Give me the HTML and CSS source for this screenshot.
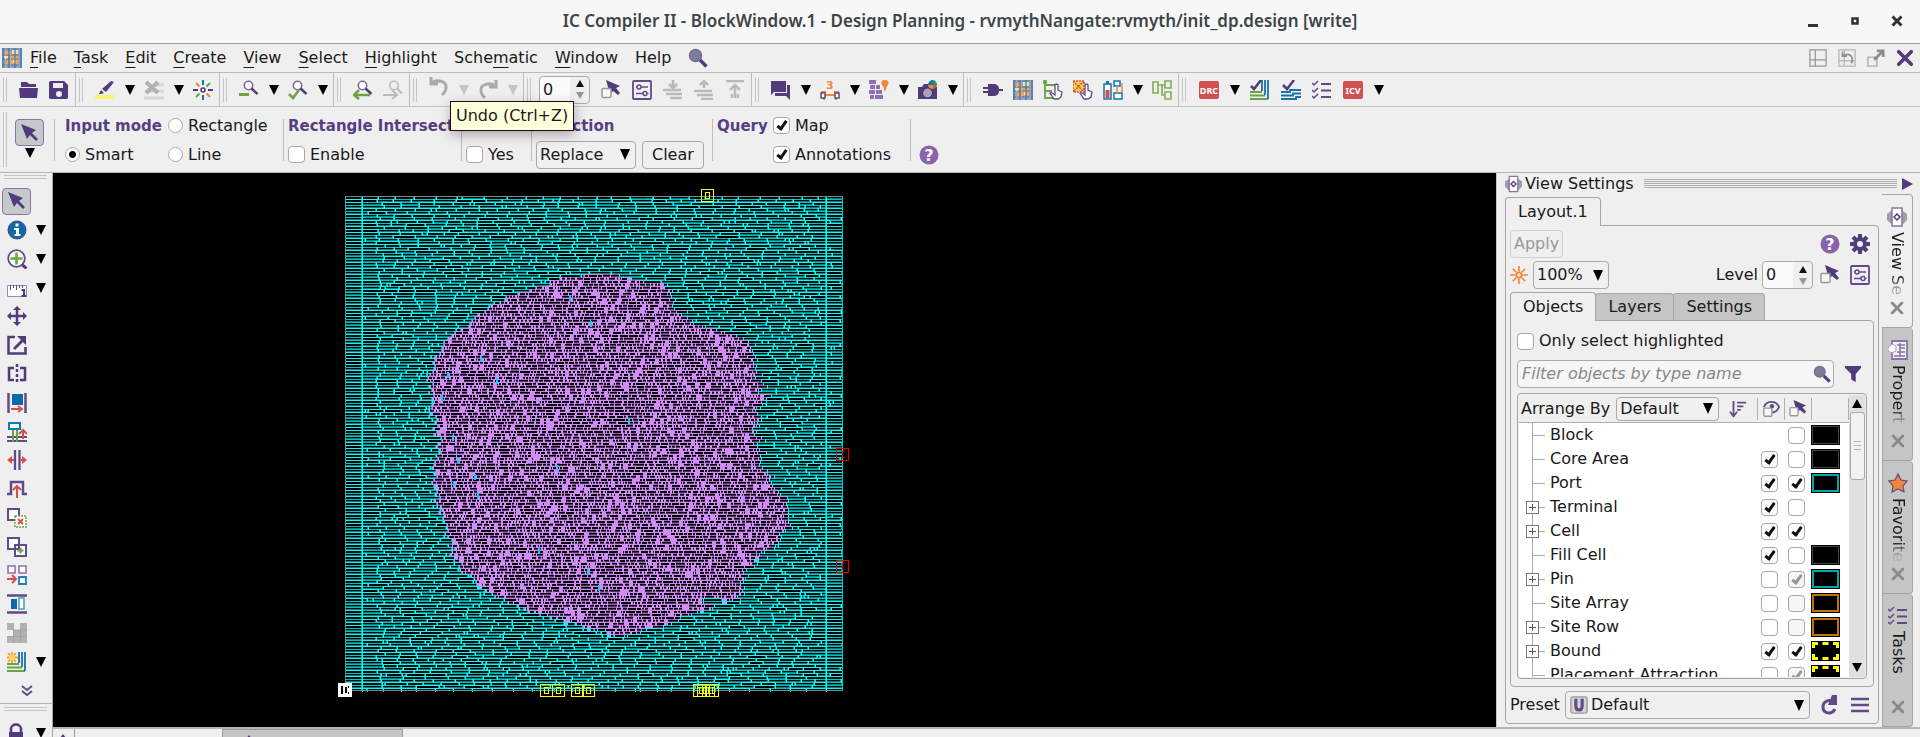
FILE: index.html
```html
<!DOCTYPE html>
<html lang="en">
<head>
  <meta charset="utf-8">
  <title>IC Compiler II - BlockWindow.1</title>
  <link rel="stylesheet" href="styles.css">
</head>
<body>
  <svg class="sprite" aria-hidden="true">
    <symbol id="chip" viewBox="0 0 20 20">
      <path fill="#8fa6bc" d="M0 0h20v20H0z"/>
      <path fill="#f6a45c" d="M3 3h6v4H3zM8 8h8v8H8zM4 13h3v5H4z"/>
      <path fill="#f3e3a0" d="M10 2h6v4h-6zM2 8h4v3H2zM11 12h3v3h-3z"/>
      <path stroke="#2a78b0" stroke-width="1.2" d="M1 0v20M7 0v20M13 0v20M19 0v20"/>
      <path stroke="#6b6b9c" stroke-dasharray="3 1.5" d="M0 1h20M0 7h20M0 11h20M0 17h20"/>
    </symbol>
    <symbol id="search" viewBox="0 0 20 20"><circle cx="7.500" cy="7.500" r="6" fill="#7b7f93" stroke="#7a6a9c" stroke-width="1.500"/><path stroke="#533c80" stroke-width="3.500" d="M12 12l6.500 6.500"/></symbol>
    <symbol id="open" viewBox="0 0 20 20"><path fill="#523b7c" d="M2 2h6l2 2h7v3H2zM0 8h19l-1 10H1z"/></symbol>
    <symbol id="save" viewBox="0 0 20 20"><path fill="#523b7c" d="M2 1h13l4 4v13l-1 1H1l-1-1V2z"/><path fill="#efefef" d="M4 3h10v5H4z"/><circle cx="10" cy="14" r="3" fill="#efefef"/></symbol>
    <symbol id="marker" viewBox="0 0 20 20"><path fill="#fbf56c" d="M0 15h20v4H0z"/><path fill="#523b7c" d="M16 1l3 1-8 10-4-3zM6 10l3 3-3 1H4z"/></symbol>
    <symbol id="unmark" viewBox="0 0 20 20"><path stroke="#d5d5d5" stroke-width="3" d="M1 11h19M0 18h20M12 5h8"/><path stroke="#b2b2b2" stroke-width="4" d="M2 2l12 11M14 2L2 13"/></symbol>
    <symbol id="burst" viewBox="0 0 20 20">
      <circle cx="10" cy="10" r="2" fill="none" stroke="#523b7c" stroke-width="1.500"/>
      <path stroke="#1673ad" stroke-width="2" d="M10 0v5M10 15v5"/><path stroke="#523b7c" stroke-width="2" d="M0 10h5M15 10h5"/>
      <path stroke="#f2863c" stroke-width="2" d="M3 3l3.500 3.500M13.500 13.500L17 17"/><path stroke="#6aa544" stroke-width="2" d="M17 3l-3.500 3.500M6.500 13.500L3 17"/>
    </symbol>
    <symbol id="lens" viewBox="0 0 20 20"><circle cx="9.500" cy="5.500" r="4.200" fill="#fff" stroke="#7b6a9e" stroke-width="1.600"/><path stroke="#523b7c" stroke-width="2.400" d="M12.500 8.500l6 5.500"/></symbol>
    <symbol id="zoom-out" viewBox="0 0 20 20"><use href="#lens"/><path fill="#6aa544" d="M0 13h10v3H0z"/></symbol>
    <symbol id="zoom-ok" viewBox="0 0 20 20"><use href="#lens"/><path fill="none" stroke="#6aa544" stroke-width="2.500" d="M1 14l4 4 6-8"/></symbol>
    <symbol id="zoom-prev" viewBox="0 0 20 20"><use href="#lens"/><path fill="none" stroke="#6aa544" stroke-width="2.500" d="M17 15H2M6 10l-5 5 5 4"/></symbol>
    <symbol id="zoom-next" viewBox="0 0 20 20"><circle cx="11" cy="5.500" r="4.200" fill="none" stroke="#bbb" stroke-width="1.600"/><path fill="none" stroke="#bbb" stroke-width="2.200" d="M14 8.500l5 5M0 15h13M9 10l5 5-5 4"/></symbol>
    <symbol id="undo" viewBox="0 0 20 20"><path fill="none" stroke="#aaa" stroke-width="3" d="M2 0v7h7M3 6c5-4 15-2 14 5 0 3-2 5-4 7"/></symbol>
    <symbol id="redo" viewBox="0 0 20 20"><path fill="none" stroke="#aaa" stroke-width="3" d="M18 0v7h-7M17 6C12 2 2 4 3 11c0 3 2 5 4 7"/></symbol>
    <symbol id="pick" viewBox="0 0 20 20"><path fill="#523b7c" d="M5 0l14 6-4 2 4 5-2 2-5-4-3 3z"/><rect x="1" y="8.500" width="9" height="9" rx="1" fill="#f7f7f7" stroke="#999" stroke-width="1.500"/></symbol>
    <symbol id="sliders" viewBox="0 0 20 20"><rect x="1" y="1" width="18" height="18" rx="1" fill="#f1eff5" stroke="#604b88" stroke-width="1.800"/><path fill="none" stroke="#604b88" stroke-width="1.500" d="M4 7h1M9 7h7M4 13.500h7M15.500 13.500h1"/><g fill="none" stroke="#604b88" stroke-width="1.500"><circle cx="7" cy="7" r="2"/><circle cx="13" cy="13.500" r="2"/></g></symbol>
    <symbol id="push-down" viewBox="0 0 20 20"><path fill="none" stroke="#b9b9b9" stroke-width="2.500" d="M0 10h18M3 14h16M7 18h12M10 0v7M6 4l4 4 4-4"/></symbol>
    <symbol id="pop-up" viewBox="0 0 20 20"><path fill="none" stroke="#b9b9b9" stroke-width="2.500" d="M0 11h18M3 15h16M7 19h12M10 8V1M6 5l4-4 4 4"/></symbol>
    <symbol id="pop-top" viewBox="0 0 20 20"><path fill="none" stroke="#b9b9b9" stroke-width="2.500" d="M1 1h18M10 18V5M5 10l5-5 5 5M7 14v4M13 14v4"/></symbol>
    <symbol id="chat" viewBox="0 0 20 20"><path fill="#523b7c" d="M0 1h15v11H3l-3 3zM16 5h3v15l-4-4H4v-3h12z"/></symbol>
    <symbol id="net3" viewBox="0 0 20 20"><text x="6" y="9" class="num">3</text><path stroke="#f2863c" stroke-width="1.800" d="M5 15h10M1 12h5M14 12h5M3 19h2M15 19h2"/><path fill="#fff" stroke="#604b88" stroke-width="1.500" d="M1 13h4v5H1zM15 13h4v5h-4z"/></symbol>
    <symbol id="bricks" viewBox="0 0 20 20"><path fill="#9070b4" d="M0 0h7v4H0zM1 5h5v4H1zM7 5h4v4H7zM0 10h6v4H0zM7 10h6v4H7zM1 15h4v4H1zM6 15h8v4H6z"/><path fill="#f2863c" d="M15.500 0c5 0 5 4 2 7l-1 4h-1l-1-4c-3-3-3-7 1-7z"/></symbol>
    <symbol id="camera" viewBox="0 0 20 20"><path fill="#523b7c" d="M0 7h4l2-3h6l2 3h5v12H0z"/><circle cx="9.500" cy="13" r="5" fill="#a7a2b8" stroke="#3b2a62"/><path fill="#2a9a55" d="M15 0a5 5 0 0 1 4 5h-4z"/><path fill="#1673ad" d="M15 0a5 5 0 0 0-5 5h5z"/><path fill="#f2863c" d="M10 5a5 5 0 0 0 5 4V5z"/><path fill="#d4504c" d="M19 5a5 5 0 0 1-4 4V5z"/></symbol>
    <symbol id="plug" viewBox="0 0 20 20"><path fill="#523b7c" d="M5 4h5c4 0 6 2 6 5h4v2h-4c0 3-2 5-6 5H5v-3H0v-2h5V9H0V7h5z"/></symbol>
    <symbol id="hand" viewBox="0 0 20 20"><path fill="#fff" stroke="#604b88" stroke-width="1.300" d="M12 13V5c0-1 3-1 3 0v5l4 2-1 5-3 2h-4l-4-6c1-1 3 0 5 2z"/></symbol>
    <symbol id="tree-hand" viewBox="0 0 20 20"><path fill="none" stroke="#6aa544" stroke-width="1.800" d="M2 0v18h8M2 5h11M2 11h7"/><circle cx="2" cy="2" r="2.200" fill="#6aa544"/><use href="#hand"/></symbol>
    <symbol id="bug-hand" viewBox="0 0 20 20"><path fill="#f7d34d" d="M0 1h11v11H0z"/><path stroke="#d4504c" stroke-width="1.600" stroke-dasharray="2 1" d="M0 1l11 11M11 1L0 12M0 1h11v11H0z" fill="none"/><use href="#hand"/></symbol>
    <symbol id="power" viewBox="0 0 20 20"><path fill="#fff" stroke="#1673ad" stroke-width="1.500" d="M1 4h7v15H1zM11 1h6v5h-6zM11 13h8v6h-8z"/><path fill="#d4504c" d="M2.500 10h4v8h-4z"/><path fill="#1673ad" d="M3 1h3v3H3z"/><path stroke="#f2863c" stroke-width="1.500" d="M14 6v7M19 3v9"/></symbol>
    <symbol id="hier" viewBox="0 0 20 20"><path fill="none" stroke="#82b060" stroke-width="1.700" d="M1 2h5v11H1zM13 1h6v7h-6zM13 12h6v7h-6zM6 5h7M10 5v10h3"/></symbol>
    <symbol id="drc" viewBox="0 0 20 20"><rect y="1" width="20" height="18" rx="2" fill="#cf5052"/><text x="10" y="14" class="tag">DRC</text></symbol>
    <symbol id="icv" viewBox="0 0 20 20"><rect y="1" width="20" height="18" rx="2" fill="#cf5052"/><text x="10" y="14" class="tag">ICV</text></symbol>
    <symbol id="layers" viewBox="0 0 20 20"><path stroke="#6aa544" stroke-width="1.800" d="M0 12h12M0 15.500h15M0 19h18"/><path stroke="#1673ad" stroke-width="1.800" d="M12 0v11M15 0v15M18 0v19"/></symbol>
    <symbol id="layer-check" viewBox="0 0 20 20"><use href="#layers"/><path fill="none" stroke="#523b7c" stroke-width="2.500" d="M1 6l3 3 7-9"/></symbol>
    <symbol id="route-check" viewBox="0 0 20 20"><path fill="none" stroke="#1673ad" stroke-width="1.800" d="M0 12h9v-2h11M0 15.500h12v-2h8M0 19h15v-2h5"/><path fill="none" stroke="#523b7c" stroke-width="2.500" d="M2 5l4 4 7-9"/></symbol>
    <symbol id="tasks" viewBox="0 0 20 20"><path stroke="#604b88" stroke-width="2" d="M9 4h10M9 10.500h10M9 17h10"/><path fill="none" stroke="#604b88" stroke-width="1.500" d="M0 3l2 2 4-4M0 10l2 2 4-4M0 16l2 2 4-4"/></symbol>
    <symbol id="arrow" viewBox="0 0 20 20"><path fill="#523b7c" d="M1 1l15 6-4 3 6 6-2 2-6-6-3 4z"/></symbol>
    <symbol id="help" viewBox="0 0 20 20"><circle cx="10" cy="10" r="9.500" fill="#8a63ab"/><text x="10" y="16" class="q">?</text></symbol>
    <symbol id="info" viewBox="0 0 20 20"><circle cx="10" cy="10" r="9" fill="#0c6aa6" stroke="#523b7c"/><path fill="#fff" d="M8.500 3.500h3v3h-3zM7 8h5v6h1.500v2h-6v-2H9v-4H7z"/></symbol>
    <symbol id="zoom-in" viewBox="0 0 20 20"><circle cx="9.500" cy="9.500" r="8.300" fill="#fff" stroke="#604b88" stroke-width="1.800"/><path stroke="#6aa544" stroke-width="2.500" d="M3.500 9.500h12M9.500 3.500v12"/><path stroke="#523b7c" stroke-width="3" d="M15.500 16l4 3.500"/></symbol>
    <symbol id="ruler" viewBox="0 0 20 20"><path fill="#fff" stroke="#9a8cb4" d="M.5 7.500h19v11H.5z"/><path stroke="#604b88" d="M3.500 7v5M6.500 7v3M9.500 7v5M12.500 7v3M15.500 7v3"/><path fill="none" stroke="#523b7c" stroke-width="2" d="M14.500 12h2.500v6M14.500 18h5"/></symbol>
    <symbol id="move" viewBox="0 0 20 20"><path stroke="#523b7c" stroke-width="2.500" d="M10 3v14M3 10h14"/><path fill="#523b7c" d="M10 0l4 4H6zM10 20l4-4H6zM0 10l4-4v8zM20 10l-4-4v8z"/></symbol>
    <symbol id="resize" viewBox="0 0 20 20"><path fill="none" stroke="#523b7c" stroke-width="2.500" d="M8 2H1.500v16.500h17V12"/><path fill="#523b7c" d="M10 1h9v9l-3-3-8 8-2-2 8-8z"/></symbol>
    <symbol id="mirror" viewBox="0 0 20 20"><path fill="none" stroke="#523b7c" stroke-width="2.500" d="M7 4H2v12h5M13 4h5v12h-5"/><path stroke="#523b7c" stroke-width="2.500" stroke-dasharray="3 2" d="M10 0v20"/></symbol>
    <symbol id="align" viewBox="0 0 20 20"><path stroke="#604b88" stroke-width="2.500" d="M1.500 0v20M18.500 0v20"/><path fill="#0c6aa6" d="M5 1h11v11H5z"/><path fill="none" stroke="#d4504c" stroke-width="1.800" d="M4 16h11M11 13l4 3-4 3"/></symbol>
    <symbol id="spread" viewBox="0 0 20 20"><path stroke="#604b88" stroke-width="2" d="M0 15h20M0 19h20"/><path fill="#fff" stroke="#0c7ab5" stroke-width="2" d="M2 1h11v6H2z"/><path stroke="#6aa544" stroke-width="2" d="M6 8v12M10 8v12"/><path fill="none" stroke="#d4504c" stroke-width="2" d="M16 17V8M12 12l4-4 4 4"/></symbol>
    <symbol id="split" viewBox="0 0 20 20"><path stroke="#604b88" stroke-width="2.300" d="M8 0v20M12.500 0v20"/><path fill="#d4504c" d="M0 10l5-4v3h2v2H5v3zM20 10l-5-4v3h-2v2h2v3z"/></symbol>
    <symbol id="pulse" viewBox="0 0 20 20"><path fill="none" stroke="#604b88" stroke-width="2.500" d="M0 15h4V3h12v12h4"/><path fill="none" stroke="#d4504c" stroke-width="2" d="M10 19V8M6 11l4-4 4 4"/></symbol>
    <symbol id="remove" viewBox="0 0 20 20"><path fill="#fff" stroke="#604b88" stroke-width="2" d="M1 1h11v11H1z"/><path fill="#fff" stroke="#6aa544" stroke-width="1.500" stroke-dasharray="2 1" d="M8 8h11v11H8z"/><path stroke="#d4504c" stroke-width="1.800" d="M11 11l5 5M16 11l-5 5"/></symbol>
    <symbol id="copy" viewBox="0 0 20 20"><path fill="#fff" stroke="#604b88" stroke-width="2" d="M1 1h11v11H1zM8 8h11v11H8z"/><path stroke="#6aa544" stroke-width="2" d="M13.500 10.500v6M10.500 13.500h6"/></symbol>
    <symbol id="array" viewBox="0 0 20 20"><path fill="#fff" stroke="#8775a5" stroke-width="1.600" d="M1 1h7v7H1zM12 1h7v7h-7z"/><path fill="#fff" stroke="#1c7fb8" stroke-width="1.800" d="M12 12h7v7h-7z"/><path fill="none" stroke="#d4504c" stroke-width="2" d="M0 14h9M5 10l4 4-4 4"/></symbol>
    <symbol id="distribute" viewBox="0 0 20 20"><path stroke="#604b88" stroke-width="2.500" d="M0 1.500h20M0 18.500h20"/><path fill="#0c6aa6" d="M4 5h6v10H4z"/><path fill="#fff" stroke="#4b9ac6" stroke-width="1.500" d="M12 4h5v11h-5z"/></symbol>
    <symbol id="blocks" viewBox="0 0 20 20"><path fill="#b2b2b2" d="M0 0h7v7h6V0h7v20H0v-7h6V7H0z"/><path stroke="#999" stroke-width=".6" d="M6.500 7v13M13.500 7v13M7 7h13M0 13.500h20"/></symbol>
    <symbol id="new-layer" viewBox="0 0 20 20"><use href="#layers"/><path stroke="#f5a030" stroke-width="1.800" d="M5 0v11M0 5.500h11M1 1l8 9M9 1l-8 9"/><circle cx="5" cy="5.500" r="3" fill="#ffd45c"/></symbol>
    <symbol id="chevrons" viewBox="0 0 20 20"><path fill="none" stroke="#604b88" stroke-width="1.800" d="M5 6l5 4 5-4M5 11l5 4 5-4"/></symbol>
    <symbol id="lock" viewBox="0 0 20 20"><path fill="none" stroke="#523b7c" stroke-width="2.500" d="M5 10V6c0-6 10-6 10 0v4"/><path fill="#523b7c" d="M3 9h14v11H3z"/></symbol>
    <symbol id="panel" viewBox="0 0 20 20"><path fill="#9aa0a8" d="M4 4h12l4 3v6l-4 4H4l-4-4V7z"/><path fill="#fff" stroke="#8775a5" stroke-width="1.500" d="M5 1h10v18H5z"/><path fill="none" stroke="#523b7c" stroke-width="1.500" d="M10 7l3 3-3 3-3-3z"/></symbol>
    <symbol id="gear" viewBox="0 0 20 20"><circle cx="10" cy="10" r="5" fill="none" stroke="#523b7c" stroke-width="4"/><path stroke="#523b7c" stroke-width="4" d="M10 0v4M10 16v4M0 10h4M16 10h4M3 3l3 3M14 14l3 3M17 3l-3 3M6 14l-3 3"/></symbol>
    <symbol id="sun" viewBox="0 0 20 20"><circle cx="10" cy="10" r="3" fill="none" stroke="#f2863c" stroke-width="2"/><path stroke="#f2863c" stroke-width="1.800" d="M10 0v6M10 14v6M0 10h6M14 10h6M3 3l4 4M13 13l4 4M17 3l-4 4M7 13l-4 4"/></symbol>
    <symbol id="funnel" viewBox="0 0 20 20"><path fill="#523b7c" d="M1 1h18v2l-6 7v9l-5-3v-6L1 3z"/></symbol>
    <symbol id="sort" viewBox="0 0 20 20"><path fill="none" stroke="#604b88" stroke-width="2" d="M5 1v17M1 13l4 5 4-5M9 3h10M9 7h7M9 11h4"/></symbol>
    <symbol id="eye" viewBox="0 0 20 20"><path fill="none" stroke="#604b88" stroke-width="2" d="M2 8c3-8 14-8 17 0-2 4-5 6-8 6"/><circle cx="11" cy="7" r="2.500" fill="#604b88"/><rect x="2" y="9" width="9" height="9" rx="1" fill="#f7f7f7" stroke="#999" stroke-width="1.500"/></symbol>
    <symbol id="refresh" viewBox="0 0 20 20"><path fill="none" stroke="#604b88" stroke-width="3" d="M15 14c-3 6-12 5-12-2 0-6 6-8 11-5"/><path fill="#604b88" d="M12 0h5v10H8z"/></symbol>
    <symbol id="menu" viewBox="0 0 20 20"><path stroke="#604b88" stroke-width="2.500" d="M1 4h18M1 10h18M1 16h18"/></symbol>
    <symbol id="props" viewBox="0 0 20 20"><path fill="#f3f0f8" stroke="#8775a5" stroke-width="1.800" d="M4 1h15v18H4z"/><path stroke="#8775a5" stroke-width="1.500" d="M9 5h8M11 8h6M9 12h8M6 16h11M12 3v14"/><path fill="#fff" stroke="#a89bc0" d="M0 8l4-4 4 2v5l-4 2-4-2z"/></symbol>
    <symbol id="star" viewBox="0 0 20 20"><path fill="#f2863c" stroke="#604b88" stroke-width="1.200" d="M10 1l3 6 6 1-4 5 1 6-6-3-6 3 1-6-4-5 6-1z"/></symbol>
    <symbol id="grid-view" viewBox="0 0 20 20"><path fill="none" stroke="#929a92" stroke-width="1.400" d="M1 1h18v18H1zM7 1v18M1 12h18"/></symbol>
    <symbol id="revert" viewBox="0 0 20 20"><path fill="none" stroke="#b4bab4" stroke-width="1.500" d="M1 1h18v18H1zM1 13h18M7 1v18"/><path fill="none" stroke="#8c928c" stroke-width="2" d="M5 3v5h5M5 8c7-5 13 0 10 8"/></symbol>
    <symbol id="detach" viewBox="0 0 20 20"><path fill="none" stroke="#a9afa9" stroke-width="1.500" d="M1 9h10v10H1z"/><path fill="none" stroke="#8c8c8c" stroke-width="3" d="M8 12L17 3M11 2h7v7"/></symbol>
    <symbol id="cross" viewBox="0 0 20 20"><path stroke="currentColor" stroke-width="4" stroke-linecap="round" d="M3 3l14 14M17 3L3 17"/></symbol>
    <symbol id="minimize" viewBox="0 0 20 20"><path fill="#2e3436" d="M5 13h10v3H5z"/></symbol>
    <symbol id="maximize" viewBox="0 0 20 20"><path fill="none" stroke="#2e3436" stroke-width="2.500" d="M7.500 7.500h5v5h-5z"/></symbol>
    <symbol id="close" viewBox="0 0 20 20"><path stroke="#2e3436" stroke-width="3" d="M5.500 5.500l9 9M14.500 5.500l-9 9"/></symbol>
    <symbol id="preset" viewBox="0 0 20 20"><rect x="1" y="1" width="18" height="18" rx="2" fill="#d4d4d4" stroke="#999" stroke-width="1.500"/><path fill="none" stroke="#604b88" stroke-width="3.500" d="M6.500 3v8c0 6 7 6 7 0V3"/></symbol>
  </svg>

  <header class="titlebar">
    <h1>IC Compiler II - BlockWindow.1 - Design Planning - rvmythNangate:rvmyth/init_dp.design [write]</h1>
    <div class="window-buttons">
      <button aria-label="Minimize"><svg class="icon"><use href="#minimize"/></svg></button>
      <button aria-label="Maximize"><svg class="icon"><use href="#maximize"/></svg></button>
      <button aria-label="Close"><svg class="icon"><use href="#close"/></svg></button>
    </div>
  </header>

  <nav class="menubar">
    <svg class="icon"><use href="#chip"/></svg>
    <div class="menus">
      <button><u>F</u>ile</button>
      <button><u>T</u>ask</button>
      <button><u>E</u>dit</button>
      <button><u>C</u>reate</button>
      <button><u>V</u>iew</button>
      <button><u>S</u>elect</button>
      <button><u>H</u>ighlight</button>
      <button>Sche<u>m</u>atic</button>
      <button><u>W</u>indow</button>
      <button>Help</button>
      <button aria-label="Search"><svg class="icon"><use href="#search"/></svg></button>
    </div>
    <div class="doc-buttons">
      <button aria-label="Tile"><svg class="icon small"><use href="#grid-view"/></svg></button>
      <button aria-label="Restore"><svg class="icon small"><use href="#revert"/></svg></button>
      <button aria-label="Detach"><svg class="icon small"><use href="#detach"/></svg></button>
      <button aria-label="Close view" class="purple"><svg class="icon small"><use href="#cross"/></svg></button>
    </div>
  </nav>

  <div class="toolbar">
    <div class="group">
      <button aria-label="Open"><svg class="icon"><use href="#open"/></svg></button>
      <button aria-label="Save"><svg class="icon"><use href="#save"/></svg></button>
    </div>
    <div class="group">
      <button aria-label="Highlight"><svg class="icon"><use href="#marker"/></svg></button>
      <button aria-label="Highlight menu" class="drop"></button>
      <button aria-label="Clear highlight"><svg class="icon"><use href="#unmark"/></svg></button>
      <button aria-label="Clear menu" class="drop"></button>
      <button aria-label="Brightness"><svg class="icon"><use href="#burst"/></svg></button>
    </div>
    <div class="group">
      <button aria-label="Zoom out"><svg class="icon"><use href="#zoom-out"/></svg></button>
      <button aria-label="Zoom out menu" class="drop"></button>
      <button aria-label="Zoom to selection"><svg class="icon"><use href="#zoom-ok"/></svg></button>
      <button aria-label="Zoom menu" class="drop"></button>
    </div>
    <div class="group">
      <button aria-label="Previous zoom"><svg class="icon"><use href="#zoom-prev"/></svg></button>
      <button aria-label="Next zoom"><svg class="icon"><use href="#zoom-next"/></svg></button>
    </div>
    <div class="group">
      <div class="tip-anchor">
        <button aria-label="Undo"><svg class="icon"><use href="#undo"/></svg></button>
        <div class="tooltip" role="tooltip">Undo (Ctrl+Z)</div>
      </div>
      <button aria-label="Undo history" class="drop off"></button>
      <button aria-label="Redo"><svg class="icon"><use href="#redo"/></svg></button>
      <button aria-label="Redo history" class="drop off"></button>
    </div>
    <div class="group wide spin-first">
      <div class="spin"><input type="text" value="0" aria-label="Hierarchy level"><span class="steps"></span></div>
      <button aria-label="Pick level"><svg class="icon"><use href="#pick"/></svg></button>
      <button aria-label="Level options"><svg class="icon"><use href="#sliders"/></svg></button>
      <button aria-label="Push down"><svg class="icon"><use href="#push-down"/></svg></button>
      <button aria-label="Pop up"><svg class="icon"><use href="#pop-up"/></svg></button>
      <button aria-label="Pop to top"><svg class="icon"><use href="#pop-top"/></svg></button>
    </div>
    <div class="group">
      <button aria-label="Annotate"><svg class="icon"><use href="#chat"/></svg></button>
      <button aria-label="Annotate menu" class="drop"></button>
      <button aria-label="Net count"><svg class="icon"><use href="#net3"/></svg></button>
      <button aria-label="Net menu" class="drop"></button>
      <button aria-label="Maps"><svg class="icon"><use href="#bricks"/></svg></button>
      <button aria-label="Maps menu" class="drop"></button>
      <button aria-label="Snapshot"><svg class="icon"><use href="#camera"/></svg></button>
      <button aria-label="Snapshot menu" class="drop"></button>
    </div>
    <div class="group">
      <button aria-label="Connect"><svg class="icon"><use href="#plug"/></svg></button>
      <button aria-label="Layout"><svg class="icon"><use href="#chip"/></svg></button>
      <button aria-label="Browse tree"><svg class="icon"><use href="#tree-hand"/></svg></button>
      <button aria-label="Browse errors"><svg class="icon"><use href="#bug-hand"/></svg></button>
      <button aria-label="Power"><svg class="icon"><use href="#power"/></svg></button>
      <button aria-label="Power menu" class="drop"></button>
      <button aria-label="Hierarchy"><svg class="icon"><use href="#hier"/></svg></button>
    </div>
    <div class="group wide last">
      <button aria-label="DRC"><svg class="icon"><use href="#drc"/></svg></button>
      <button aria-label="DRC menu" class="drop"></button>
      <button aria-label="Check layers"><svg class="icon"><use href="#layer-check"/></svg></button>
      <button aria-label="Check routes"><svg class="icon"><use href="#route-check"/></svg></button>
      <button aria-label="Checklist"><svg class="icon"><use href="#tasks"/></svg></button>
      <button aria-label="ICV"><svg class="icon"><use href="#icv"/></svg></button>
      <button aria-label="ICV menu" class="drop"></button>
    </div>
  </div>

  <div class="options">
    <div class="mode">
      <button class="tool on" aria-label="Selection tool"><svg class="icon"><use href="#arrow"/></svg></button>
      <button class="drop" aria-label="Tool menu"></button>
    </div>
    <div class="section input-mode">
      <strong>Input mode</strong>
      <label><input type="radio" name="mode">Rectangle</label>
      <label><input type="radio" name="mode" checked>Smart</label>
      <label><input type="radio" name="mode">Line</label>
    </div>
    <div class="section intersect">
      <strong>Rectangle Intersect</strong>
      <label><input type="checkbox">Enable</label>
    </div>
    <div class="section yes">
      <label><input type="checkbox">Yes</label>
    </div>
    <div class="section selection">
      <strong>Selection</strong>
      <div class="pair">
        <span class="combo"><select aria-label="Selection"><option>Replace</option></select></span>
        <button class="push">Clear</button>
      </div>
    </div>
    <div class="section query">
      <strong>Query</strong>
      <label><input type="checkbox" checked>Map</label>
      <label class="second"><input type="checkbox" checked>Annotations</label>
    </div>
    <div class="section about">
      <button aria-label="Help"><svg class="icon"><use href="#help"/></svg></button>
    </div>
  </div>

  <div class="work">
    <aside class="tools">
      <div class="grip"></div>
      <div class="tool-list">
        <div><button class="tool on" aria-label="Select"><svg class="icon"><use href="#arrow"/></svg></button></div>
        <div><button aria-label="Info"><svg class="icon"><use href="#info"/></svg></button><button class="drop" aria-label="Info menu"></button></div>
        <div><button aria-label="Zoom in"><svg class="icon"><use href="#zoom-in"/></svg></button><button class="drop" aria-label="Zoom in menu"></button></div>
        <div><button aria-label="Ruler"><svg class="icon"><use href="#ruler"/></svg></button><button class="drop" aria-label="Ruler menu"></button></div>
        <div><button aria-label="Move"><svg class="icon"><use href="#move"/></svg></button></div>
        <div><button aria-label="Resize"><svg class="icon"><use href="#resize"/></svg></button></div>
        <div><button aria-label="Mirror"><svg class="icon"><use href="#mirror"/></svg></button></div>
        <div><button aria-label="Align"><svg class="icon"><use href="#align"/></svg></button></div>
        <div><button aria-label="Spread"><svg class="icon"><use href="#spread"/></svg></button></div>
        <div><button aria-label="Split"><svg class="icon"><use href="#split"/></svg></button></div>
        <div><button aria-label="Reshape"><svg class="icon"><use href="#pulse"/></svg></button></div>
        <div><button aria-label="Remove"><svg class="icon"><use href="#remove"/></svg></button></div>
        <div><button aria-label="Copy"><svg class="icon"><use href="#copy"/></svg></button></div>
        <div><button aria-label="Array"><svg class="icon"><use href="#array"/></svg></button></div>
        <div><button aria-label="Distribute"><svg class="icon"><use href="#distribute"/></svg></button></div>
        <div><button aria-label="Blocks"><svg class="icon"><use href="#blocks"/></svg></button></div>
        <div><button aria-label="New layer"><svg class="icon"><use href="#new-layer"/></svg></button><button class="drop" aria-label="Layer menu"></button></div>
      </div>
      <button class="more" aria-label="More tools"><svg class="icon"><use href="#chevrons"/></svg></button>
      <div class="tools-end">
        <div class="grip"></div>
        <div class="lock-row"><button aria-label="Lock"><svg class="icon"><use href="#lock"/></svg></button><button class="drop" aria-label="Lock menu"></button></div>
      </div>
    </aside>

    <div class="center">
      <div class="views">
        <main class="stage"><canvas id="layout"></canvas></main>

        <aside class="dock">
          <div class="dock-title">
            <svg class="icon"><use href="#panel"/></svg>
            <span>View Settings</span>
            <i class="lines"></i>
            <button class="fold" aria-label="Collapse"></button>
          </div>
          <div class="dock-body">
            <div class="settings">
              <div class="tabs"><button class="tab active">Layout.1</button></div>
              <div class="page">
                <div class="line">
                  <button class="push" disabled>Apply</button>
                  <span class="space"></span>
                  <button aria-label="Help"><svg class="icon"><use href="#help"/></svg></button>
                  <button aria-label="Preferences"><svg class="icon"><use href="#gear"/></svg></button>
                </div>
                <div class="line">
                  <svg class="icon sun"><use href="#sun"/></svg>
                  <span class="combo scale"><select aria-label="Brightness"><option>100%</option></select></span>
                  <span class="space"></span>
                  <label for="level">Level</label>
                  <div class="spin"><input type="text" id="level" value="0"><span class="steps"></span></div>
                  <button aria-label="Pick level"><svg class="icon"><use href="#pick"/></svg></button>
                  <button aria-label="Level options"><svg class="icon"><use href="#sliders"/></svg></button>
                </div>
                <div class="tabs inner">
                  <button class="tab active">Objects</button>
                  <button class="tab">Layers</button>
                  <button class="tab">Settings</button>
                </div>
                <div class="objects">
                  <label class="only"><input type="checkbox">Only select highlighted</label>
                  <div class="filter">
                    <div class="field">
                      <input type="text" placeholder="Filter objects by type name" aria-label="Filter objects">
                      <svg class="icon small"><use href="#search"/></svg>
                    </div>
                    <button aria-label="Filter"><svg class="icon small"><use href="#funnel"/></svg></button>
                  </div>
                  <div class="list">
                    <div class="list-main">
                      <div class="list-head">
                        <label for="arrange">Arrange By</label>
                        <span class="combo"><select id="arrange"><option>Default</option></select></span>
                        <button class="sort" aria-label="Sort"><svg class="icon small"><use href="#sort"/></svg></button>
                        <span class="col"><svg class="icon small"><use href="#eye"/></svg></span>
                        <span class="col"><svg class="icon small"><use href="#pick"/></svg></span>
                        <span class="col wide-col"></span>
                      </div>
                      <div class="rows"><table><tbody id="rows"></tbody></table></div>
                    </div>
                    <div class="scroll"><i class="up"></i><i class="thumb"></i><i class="down"></i></div>
                  </div>
                </div>
                <div class="line preset">
                  <label for="preset-select">Preset</label>
                  <span class="combo"><svg class="icon small"><use href="#preset"/></svg><select id="preset-select"><option>Default</option></select></span>
                  <button aria-label="Reload"><svg class="icon"><use href="#refresh"/></svg></button>
                  <button aria-label="Preset menu"><svg class="icon"><use href="#menu"/></svg></button>
                </div>
              </div>
            </div>
            <div class="side-tabs">
              <div class="side active"><svg class="icon"><use href="#panel"/></svg><span class="fade">View Se</span><button aria-label="Close View Settings"><svg class="icon tiny"><use href="#cross"/></svg></button></div>
              <div class="side"><svg class="icon"><use href="#props"/></svg><span class="fade">Propert</span><button aria-label="Close Properties"><svg class="icon tiny"><use href="#cross"/></svg></button></div>
              <div class="side"><svg class="icon"><use href="#star"/></svg><span class="fade">Favorite</span><button aria-label="Close Favorites"><svg class="icon tiny"><use href="#cross"/></svg></button></div>
              <div class="side"><svg class="icon"><use href="#tasks"/></svg><span>Tasks</span><button aria-label="Close Tasks"><svg class="icon tiny"><use href="#cross"/></svg></button></div>
            </div>
          </div>
        </aside>
      </div>
      <div class="bottom-tabs">
        <i class="pin"></i>
        <div class="bottom-current"></div>
        <div class="bottom-other"><i class="pin"></i></div>
      </div>
    </div>
  </div>

  <script src="layout.js"></script>
</body>
</html>
```

FILE: styles.css
```css
*, *::before, *::after {
  box-sizing: border-box;
}
body {
  margin: 0;
  height: 100vh;
  overflow: hidden;
  display: flex;
  flex-direction: column;
  background-color: #efefef;
  color: #1a1a1a;
  font-family: "DejaVu Sans", sans-serif;
  font-size: 16px;
  line-height: 20px;
}
button, input, select {
  font: inherit;
  color: inherit;
  margin: 0;
}
button {
  background: none;
  border: none;
  padding: 0;
  flex: none;
}
label {
  white-space: nowrap;
}
.sprite {
  position: absolute;
  width: 0;
  height: 0;
}
.icon {
  display: block;
  width: 20px;
  height: 20px;
  flex: none;
}
.icon.small {
  width: 18px;
  height: 18px;
}
.icon.tiny {
  width: 14px;
  height: 14px;
}
.num {
  font: bold 11px "DejaVu Sans", sans-serif;
  fill: #f2863c;
}
.tag {
  font: bold 9px "Noto Sans", sans-serif;
  fill: #fff;
  text-anchor: middle;
}
.q {
  font: bold 16px "DejaVu Sans", sans-serif;
  fill: #fff;
  text-anchor: middle;
}
.space {
  flex: 1;
}

/* title and menus */
.titlebar {
  height: 44px;
  flex: none;
  display: flex;
  align-items: center;
  position: relative;
  background-color: #f7f7f7;
  border-bottom: 1px solid #9c9f93;
}
.titlebar h1 {
  flex: 1;
  margin: 0;
  padding-bottom: 2px;
  text-align: center;
  font-family: "Noto Sans", sans-serif;
  font-size: 17px;
  font-weight: 600;
  color: #3c4548;
}
.window-buttons {
  position: absolute;
  right: 13px;
  display: flex;
  gap: 22px;
  padding-bottom: 2px;
}
.menubar {
  height: 29px;
  flex: none;
  display: flex;
  align-items: center;
  padding: 0 6px 0 2px;
  border-bottom: 1px solid #bdbdbd;
}
.menus {
  flex: 1;
  display: flex;
  align-items: center;
  gap: 17px;
  padding-left: 8px;
}
.menus u {
  text-underline-offset: 4px;
  text-decoration-thickness: 1px;
}
.doc-buttons {
  display: flex;
  gap: 11px;
}
.purple {
  color: #523b7c;
}

/* icon toolbar */
.toolbar {
  height: 34px;
  flex: none;
  display: flex;
  border-bottom: 1px solid #c2c2c2;
}
.group {
  display: flex;
  align-items: center;
  gap: 10px;
  padding: 0 6px 0 3px;
  border-right: 1px solid #bdbdbd;
}
.group::before {
  content: "";
  width: 4px;
  height: 24px;
  margin-right: 2px;
  border: solid #c4c4c4;
  border-width: 0 1px;
}
.wide {
  gap: 11px;
}
.spin-first::before {
  margin-right: -3px;
}
.last {
  border-right: none;
}
.drop {
  width: 9px;
  height: 20px;
  display: flex;
  align-items: center;
}
.drop::before {
  content: "";
  border: solid transparent;
  border-width: 10px 5px 0;
  border-top-color: #000;
}
.drop.off::before {
  border-top-color: #c4c4c4;
}
.tip-anchor {
  position: relative;
}
.tooltip {
  position: absolute;
  z-index: 5;
  left: 21px;
  top: 24px;
  padding: 4px 5px;
  white-space: nowrap;
  background-color: #ffffdc;
  border: 1px solid #111;
  box-shadow: 1px 4px 12px rgba(60, 30, 60, 0.35);
}
.spin {
  width: 51px;
  height: 28px;
  display: flex;
  align-items: center;
  border: 1px solid #a9a9a9;
  border-radius: 4px;
  background: linear-gradient(90deg, #fafafa 30px, #efefef 30px);
}
.spin input {
  width: 30px;
  padding: 0 0 0 3px;
  border: none;
  background: none;
}
.steps {
  margin-left: 6px;
}
.steps::before, .steps::after {
  content: "";
  display: block;
  border: solid transparent;
  border-width: 0 4px 7px;
  border-bottom-color: #111;
}
.steps::after {
  margin-top: 5px;
  border-width: 7px 4px 0;
  border-top-color: #909a90;
}

/* selection options */
.options {
  height: 66px;
  flex: none;
  display: flex;
  padding: 5px 3px;
  border-bottom: 1px solid #b5b5b5;
}
.options::before {
  content: "";
  width: 4px;
  border: solid #c4c4c4;
  border-width: 0 1px;
}
.mode {
  display: flex;
  flex-direction: column;
  align-items: center;
  padding: 7px 10px 0 8px;
}
.mode .drop {
  height: 14px;
}
.tool {
  width: 29px;
  height: 27px;
  display: flex;
  align-items: center;
  justify-content: center;
}
.tool.on {
  background-color: #c5c9cc;
  border: 1px solid #8a74a8;
  border-radius: 4px;
}
.section {
  display: grid;
  grid-template-rows: 27px 27px;
  row-gap: 2px;
  align-items: center;
  align-content: start;
  justify-items: start;
  position: relative;
  padding-left: 5px;
}
.section::before {
  content: "";
  position: absolute;
  left: 0;
  top: 7px;
  height: 42px;
  border-left: 1px solid #bdbdbd;
}
.section strong {
  font-size: 15px;
  color: #573e84;
  white-space: nowrap;
}
.section label, .only {
  display: flex;
  align-items: center;
  gap: 5px;
}
.input-mode {
  grid-template-columns: 103px 115px;
  padding-left: 11px;
}
.intersect {
  grid-template-columns: 173px;
}
.yes {
  grid-template-columns: 65px;
}
.yes label {
  grid-row: 2;
}
.selection {
  grid-template-columns: 176px;
}
.pair {
  display: flex;
  gap: 6px;
}
.query {
  grid-template-columns: 56px 137px;
}
.query .second {
  grid-column: 2;
}
.about {
  padding-left: 9px;
}
.about button {
  grid-row: 2;
}
input[type="checkbox"], input[type="radio"] {
  appearance: none;
  flex: none;
  width: 17px;
  height: 17px;
  position: relative;
  background-color: #fff;
  border: 1px solid #a8a8a8;
  border-radius: 4px;
}
input[type="radio"] {
  width: 15px;
  height: 15px;
  border-color: #a3b3a3;
  border-radius: 50%;
}
input[type="radio"]:checked {
  background: radial-gradient(circle, #000 3px, #fff 4px);
}
input[type="checkbox"]:checked::after {
  content: "";
  position: absolute;
  left: 5px;
  top: 1px;
  width: 6px;
  height: 11px;
  border: solid #111;
  border-width: 0 3px 3px 0;
  transform: rotate(35deg);
}
input[type="checkbox"]:disabled {
  background-color: #f6f6f6;
}
input[type="checkbox"]:disabled::after {
  border-color: #8f9a8f;
}
.combo {
  position: relative;
  display: flex;
  align-items: center;
  height: 28px;
  border: 1px solid #a9a9a9;
  border-radius: 4px;
  background-color: #f0f0f0;
}
.combo select {
  appearance: none;
  flex: 1;
  min-width: 0;
  width: 98px;
  padding: 0 20px 0 3px;
  border: none;
  background: none;
  color: #1a1a1a;
}
.combo::after {
  content: "";
  position: absolute;
  right: 5px;
  border: solid transparent;
  border-width: 11px 5px 0;
  border-top-color: #000;
}
.push {
  height: 28px;
  padding: 0 9px;
  border: 1px solid #a9a9a9;
  border-radius: 4px;
}
.push:disabled {
  padding: 0 3px;
  color: #929d92;
  border-color: #cfcfcf;
}

/* left tools */
.work {
  flex: 1;
  min-height: 0;
  display: flex;
}
.tools {
  width: 53px;
  flex: none;
  display: flex;
  flex-direction: column;
  border-right: 1px solid #a5a5a5;
}
.grip {
  height: 4px;
  margin: 2px 5px 0 4px;
  border: solid #c4c4c4;
  border-width: 1px 0;
}
.tool-list {
  flex: 1;
  display: flex;
  flex-direction: column;
  padding: 8px 0 0 2px;
}
.tool-list > div, .lock-row {
  flex: 1;
  display: flex;
  align-items: center;
}
.tool-list button:first-child {
  width: 29px;
  display: flex;
  justify-content: center;
}
.tool-list .drop {
  margin-left: 5px;
}
.more {
  height: 27px;
  padding-left: 17px;
}
.tools-end {
  height: 34px;
  overflow: hidden;
  border-top: 1px solid #b5b5b5;
}
.tools-end .grip {
  margin-top: 3px;
}
.lock-row {
  padding: 12px 0 0 6px;
  gap: 10px;
}

/* layout view */
.center {
  flex: 1;
  min-width: 0;
  display: flex;
  flex-direction: column;
}
.views {
  flex: 1;
  min-height: 0;
  display: flex;
}
.stage {
  flex: 1;
  min-width: 0;
  overflow: hidden;
  background-color: #000;
}
#layout {
  display: block;
  width: 100%;
  height: 100%;
}
.bottom-tabs {
  height: 10px;
  overflow: hidden;
  display: flex;
  align-items: flex-start;
  border-top: 2px solid #b5b5b5;
}
.bottom-tabs .pin {
  margin: 5px 8px 0 7px;
  border: solid transparent;
  border-width: 0 3px 4px;
  border-bottom-color: #523b7c;
}
.bottom-current {
  width: 148px;
  height: 10px;
  border-left: 1px solid #999;
}
.bottom-other {
  width: 181px;
  height: 10px;
  padding-left: 16px;
  display: flex;
  align-items: flex-start;
  background-color: #c5c5c5;
  border: 1px solid #999;
}

/* right dock */
.dock {
  width: 424px;
  flex: none;
  display: flex;
  flex-direction: column;
  padding: 0 7px 0 8px;
  border-left: 1px solid #c5c5c5;
}
.dock-title {
  height: 21px;
  display: flex;
  align-items: center;
}
.dock-title .icon {
  width: 17px;
  height: 18px;
  margin-right: 3px;
}
.lines {
  flex: 1;
  height: 9px;
  margin: 0 5px 0 10px;
  background: repeating-linear-gradient(#b0b0b0 0 1px, #efefef 1px 2px);
}
.fold {
  border: solid transparent;
  border-width: 6px 0 6px 11px;
  border-left-color: #523b7c;
}
.dock-body {
  flex: 1;
  min-height: 0;
  display: flex;
  gap: 3px;
}
.settings {
  flex: 1;
  min-width: 0;
  display: flex;
  flex-direction: column;
  padding: 3px 0;
}
.tabs {
  display: flex;
  align-items: flex-end;
}
.tab {
  height: 27px;
  margin: 0 -1px 0 0;
  padding: 0 12px;
  background-color: #c5c5c5;
  border: 1px solid #a5a5a5;
  border-bottom: none;
  border-radius: 4px 4px 0 0;
}
.tab.active {
  position: relative;
  height: 29px;
  margin-bottom: -1px;
  background-color: #efefef;
}
.page, .objects {
  flex: 1;
  min-height: 0;
  display: flex;
  flex-direction: column;
  border: 1px solid #a5a5a5;
  border-radius: 0 4px 4px 4px;
}
.page {
  padding: 4px 4px 4px;
}
.line {
  display: flex;
  align-items: center;
  gap: 10px;
  padding-right: 4px;
  margin-bottom: 3px;
}
.line .combo {
  margin-left: -5px;
}
.line .spin {
  margin: 0 -3px 0 -6px;
}
.line .sun {
  width: 18px;
}
.scale select {
  width: 74px;
}
.objects {
  padding: 11px 6px 7px;
}
.only {
  height: 18px;
  margin-bottom: 10px;
}
.filter {
  display: flex;
  align-items: center;
  gap: 10px;
  padding-right: 5px;
  margin-bottom: 5px;
}
.field {
  flex: 1;
  height: 28px;
  display: flex;
  align-items: center;
  padding: 0 2px 0 4px;
  background-color: #f6f6f6;
  border: 1px solid #a9a9a9;
  border-radius: 4px;
}
.field input {
  flex: 1;
  min-width: 0;
  padding: 0;
  border: none;
  background: none;
}
.field input::placeholder {
  font-style: italic;
  color: #888;
}
.list {
  flex: 1;
  min-height: 0;
  display: flex;
  border: 1px solid #a5a5a5;
  border-radius: 4px;
  padding: 1px;
}
.list-main {
  flex: 1;
  min-width: 0;
  display: flex;
  flex-direction: column;
}
.list-head {
  height: 28px;
  flex: none;
  display: flex;
  align-items: center;
  padding-left: 2px;
  border-bottom: 1px solid #b0b0b0;
}
.list-head .combo {
  height: 24px;
  width: 103px;
  margin-left: 6px;
}
.sort {
  flex: 1;
  display: flex;
  justify-content: center;
}
.col {
  width: 27px;
  height: 22px;
  display: flex;
  align-items: center;
  justify-content: center;
  border-left: 1px solid #b0b0b0;
}
.wide-col {
  width: 38px;
  border-right: 1px solid #b0b0b0;
}
.rows {
  flex: 1;
  overflow: hidden;
  background-color: #fff;
}
.rows table {
  width: 100%;
  border-collapse: collapse;
}
.rows td {
  height: 24px;
  padding: 0;
}
.rows td:nth-child(n + 2) {
  width: 27px;
}
.rows td:last-child {
  width: 38px;
}
.rows input[type="checkbox"] {
  display: block;
  margin-left: 4px;
}
.name {
  height: 24px;
  display: flex;
  align-items: center;
  white-space: nowrap;
  background: linear-gradient(#aaa, #aaa) 13px 0 / 1px 100% no-repeat;
}
.node {
  width: 13px;
  height: 13px;
  margin: 0 0 0 7px;
}
.node.plus {
  border: 1px solid #777;
  background:
    linear-gradient(#555, #555) center / 7px 1px no-repeat,
    linear-gradient(#555, #555) center / 1px 7px no-repeat,
    #fff;
}
.twig {
  width: 6px;
  height: 1px;
  margin-right: 5px;
  background-color: #aaa;
}
.leaf .twig {
  width: 12px;
  margin-left: -6px;
}
.swatch {
  display: block;
  width: 29px;
  height: 20px;
  background-color: #000;
  border: 1px solid #000;
}
.swatch::before {
  content: "";
  display: block;
  height: 18px;
  border: 2px solid;
}
.gray { color: #444; }
.teal { color: #00a8a8; }
.orange { color: #c07800; }
.yellow { color: #ff0; }
.swatch.gray::before {
  border-width: 1px;
}
.swatch.yellow::before {
  border: 3px dashed;
}
.scroll {
  width: 16px;
  display: flex;
  flex-direction: column;
  align-items: center;
  background-color: #e0e0e0;
}
.up, .down {
  border: solid transparent;
  border-width: 0 5px 9px;
  border-bottom-color: #000;
  margin: 4px 0 4px;
}
.down {
  border-width: 9px 5px 0;
  border-top-color: #000;
  margin: auto 0 5px;
}
.thumb {
  width: 15px;
  height: 68px;
  border: 1px solid #a9a9a9;
  border-radius: 3px;
  background: repeating-linear-gradient(#b5b5b5 0 1px, #f2f2f2 1px 4px) center / 7px 10px no-repeat #f2f2f2;
}
.line.preset {
  margin: 4px 0 0;
}
.preset .combo {
  flex: 1;
  padding-left: 4px;
}
.side-tabs {
  width: 31px;
  display: flex;
  flex-direction: column;
}
.side {
  flex: 1;
  display: flex;
  flex-direction: column;
  align-items: center;
  padding: 12px 0 12px;
  background-color: #c5c5c5;
  border: 1px solid #a5a5a5;
  border-top: none;
  border-radius: 0 4px 4px 0;
  color: #1a1a1a;
}
.side.active {
  background-color: #efefef;
  border-top: 1px solid #a5a5a5;
  border-left: none;
}
.side span {
  flex: 1;
  padding-top: 5px;
  writing-mode: vertical-rl;
  white-space: nowrap;
}
.side button {
  color: #8a8a8a;
}
.fade {
  color: transparent;
  background: linear-gradient(#1a1a1a 65%, #a8b0a8 85%);
  background-clip: text;
  -webkit-background-clip: text;
}
```

FILE: layout.js
```js
// object list: name, expandable, visible, selectable, swatch
const objects = [
  ['Block', false, null, 'off', 'gray'],
  ['Core Area', false, 'on', 'off', 'gray'],
  ['Port', false, 'on', 'on', 'teal'],
  ['Terminal', true, 'on', 'off', null],
  ['Cell', true, 'on', 'on', null],
  ['Fill Cell', false, 'on', 'off', 'gray'],
  ['Pin', true, 'off', 'on disabled', 'teal'],
  ['Site Array', false, 'off', 'off disabled', 'orange'],
  ['Site Row', true, 'off', 'off disabled', 'orange'],
  ['Bound', true, 'on', 'on', 'yellow'],
  ['Placement Attraction', false, 'off', 'on disabled', 'yellow']
];

function box(state, label) {
  if (!state) return '';
  const checked = state.startsWith('on') ? 'checked' : '';
  const disabled = state.endsWith('disabled') ? 'disabled' : '';
  return `<input type="checkbox" aria-label="${label}" ${checked} ${disabled}>`;
}

document.getElementById('rows').innerHTML = objects.map(([name, plus, vis, sel, color]) => `
  <tr>
    <td><div class="name ${plus ? '' : 'leaf'}"><i class="node ${plus ? 'plus' : ''}"></i><i class="twig"></i>${name}</div></td>
    <td>${box(vis, name + ' visible')}</td>
    <td>${box(sel, name + ' selectable')}</td>
    <td>${color ? `<span class="swatch ${color}"></span>` : ''}</td>
  </tr>`).join('');

// die placement view
const DIE = { x: 292, y: 23, w: 498, h: 495 };
const VIEW_HEIGHT = 554;

// outline of the placed core logic
const core = [
  [507, 103], [530, 101], [560, 101], [580, 105], [610, 110], [617, 130], [640, 150],
  [674, 159], [690, 164], [698, 187], [706, 220], [702, 254], [706, 290], [716, 305],
  [730, 328], [733, 352], [718, 372], [706, 382], [690, 398], [688, 406], [682, 428],
  [660, 424], [645, 424], [655, 434], [614, 448], [567, 463], [545, 456], [517, 448],
  [477, 437], [455, 429], [430, 416], [412, 398], [400, 380], [394, 355], [384, 330],
  [380, 300], [386, 268], [379, 240], [376, 208], [380, 187], [390, 167], [410, 154],
  [427, 140], [457, 120], [490, 112]
];

let seed = 7;
function rand() {
  seed = (seed * 16807) % 2147483647;
  return seed / 2147483647;
}

function inCore(x, y) {
  let inside = false;
  for (let i = 0, j = core.length - 1; i < core.length; j = i++) {
    const [xi, yi] = core[i];
    const [xj, yj] = core[j];
    if ((yi > y) !== (yj > y) && x < (xj - xi) * (y - yi) / (yj - yi) + xi) inside = !inside;
  }
  return inside;
}

const CYAN = '0, 255, 255';
const VIOLET = '210, 140, 250';

function fill(ctx, rgb, alpha, x, y, w, h) {
  ctx.fillStyle = `rgba(${rgb}, ${alpha})`;
  ctx.fillRect(x, y, w, h);
}

// filler cell: bright outline, every other row backed by a dimmer one
function drawFiller(ctx, x, y, w, dim) {
  fill(ctx, CYAN, dim ? 0.75 : 1, x, y, w, 1);
  if (dim) fill(ctx, CYAN, 0.5, x, y + 2, w, 1);
  fill(ctx, CYAN, 1, x, y, 1, 4);
  fill(ctx, CYAN, 0.6, x + w - 1, y, 1, 3);
}

function drawLogic(ctx, x, y, w, dim) {
  fill(ctx, VIOLET, dim ? 0.7 : 1, x, y, w, 1);
  if (dim) fill(ctx, VIOLET, 0.35, x, y + 2, w, 1);
  fill(ctx, VIOLET, 1, x, y, rand() < 0.4 ? 2 : 1, 4);
  if (rand() < 0.07) fill(ctx, VIOLET, 1, x, y, 4, 6);
}

function drawDie(ctx) {
  const right = DIE.x + DIE.w;
  for (let row = 0; row < 165; row++) {
    const y = DIE.y + row * 3;
    const shift = Math.floor(rand() * 7) - 3;
    let x = DIE.x;
    while (x < right) {
      const placed = inCore(x + shift, y);
      let w;
      if (placed) {
        w = 3 + Math.floor(rand() * rand() * 11);
      } else if (x === DIE.x) {
        w = 17;
      } else {
        w = rand() < 0.08 ? 3 + Math.floor(rand() * 4) : 14 + Math.floor(rand() * 10);
      }
      if (!placed) {
        // filler cells stop where the logic starts
        for (let d = 1; d < w; d++) {
          if (inCore(x + d + shift, y)) { w = d; break; }
        }
        // the last column is aligned to the die edge
        if (x < right - 17 && x + w > right - 22) w = right - 17 - x;
      }
      w = Math.min(w, right - x);
      const dim = rand() < 0.2 ? row % 2 === 0 : row % 2 === 1;
      if (placed) drawLogic(ctx, x, y, w, dim);
      else drawFiller(ctx, x, y, w, dim);
      x += w;
    }
  }
  ctx.fillStyle = '#00d8ff';
  const dots = [[516, 122], [537, 148], [427, 183], [394, 199], [388, 222], [399, 262], [404, 284],
    [421, 301], [503, 292], [534, 396], [485, 375], [575, 245], [443, 205], [400, 308], [545, 412], [424, 320]];
  dots.forEach(([x, y]) => ctx.fillRect(x, y, 2, 6));

  ctx.strokeStyle = '#6c8f90';
  ctx.lineWidth = 1;
  ctx.strokeRect(DIE.x + 0.5, DIE.y + 0.5, DIE.w - 1, DIE.h - 1);
  ctx.fillStyle = '#00c8c8';
  ctx.fillRect(right - 1, DIE.y, 1, DIE.h);
}

function drawPin(ctx, x, y, color, letter) {
  ctx.strokeStyle = color;
  ctx.lineWidth = 1;
  ctx.strokeRect(x + 0.5, y + 0.5, 12, 12);
  if (letter === 'O') {
    ctx.strokeRect(x + 4.5, y + 3.5, 4, 6);
  } else {
    ctx.strokeRect(x + 6.5, y + 3.5, 0, 6);
    ctx.strokeRect(x + 5.5, y + 3.5, 3, 0);
    ctx.strokeRect(x + 5.5, y + 9.5, 3, 0);
  }
}

function draw() {
  const canvas = document.getElementById('layout');
  canvas.width = canvas.clientWidth;
  canvas.height = canvas.clientHeight;
  const ctx = canvas.getContext('2d');
  const scale = Math.round(canvas.height / VIEW_HEIGHT * 20) / 20;
  ctx.scale(scale, scale);
  seed = 7;
  drawDie(ctx);

  drawPin(ctx, 648, 16, '#ff0', 'O');
  [487, 499, 518, 529].forEach(x => drawPin(ctx, x, 511, '#ff0', 'O'));
  [640, 644, 649, 653].forEach(x => drawPin(ctx, x, 511, '#ff0', 'I'));
  drawPin(ctx, 783, 387, '#e00000', 'I');
  drawPin(ctx, 783, 275, '#e00000', 'I');

  // origin marker
  ctx.fillStyle = '#fff';
  ctx.fillRect(285, 510, 14, 14);
  ctx.fillStyle = '#000';
  ctx.fillRect(288, 513, 2, 8);
  ctx.fillRect(292, 514, 2, 6);
  ctx.fillRect(295, 513, 1, 2);
  ctx.fillRect(295, 519, 1, 2);
}

draw();
window.addEventListener('resize', draw);
```
